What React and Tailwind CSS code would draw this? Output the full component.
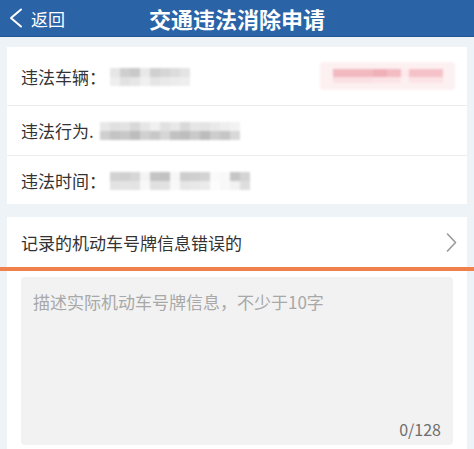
const FONT = { fontFamily: '"Noto Sans CJK SC", "Noto Sans", sans-serif' };

// mosaic rows for blurred values (top row / bottom row shades)
const vehicle = [
  ["bg-[#e6e6e6]", "bg-[#cfcfcf]", "bg-[#c9c9c9]", "bg-[#e8e8e8]", "bg-[#d0d0d0]", "bg-[#d6d6d6]", "bg-[#dcdcdc]", "bg-[#e4e4e4]"],
  ["bg-[#eeeeee]", "bg-[#e2e2e2]", "bg-[#e6e6e6]", "bg-[#f0f0f0]", "bg-[#e5e5e5]", "bg-[#e9e9e9]", "bg-[#ececec]", "bg-[#eeeeee]"],
];

const behavior = [
  ["bg-[#e8e8e8]", "bg-[#e0e0e0]", "bg-[#e3e3e3]", "bg-[#d8d8d8]", "bg-[#e6e6e6]", "bg-[#f0f0f0]", "bg-[#e1e1e1]", "bg-[#e8e8e8]", "bg-[#d9d9d9]", "bg-[#e6e6e6]", "bg-[#e4e4e4]", "bg-[#e9e9e9]", "bg-[#eeeeee]", "bg-[#f2f2f2]"],
  ["bg-[#cfcfcf]", "bg-[#c4c4c4]", "bg-[#c8c8c8]", "bg-[#bdbdbd]", "bg-[#d0d0d0]", "bg-[#c8c8c8]", "bg-[#d6d6d6]", "bg-[#c2c2c2]", "bg-[#bebebe]", "bg-[#cacaca]", "bg-[#bcbcbc]", "bg-[#cdcdcd]", "bg-[#c6c6c6]", "bg-[#d8d8d8]"],
];

const timeRow = [
  ["bg-[#d2d2d2]", "bg-[#d0d0d0]", "bg-[#d6d6d6]", "bg-[#f4f4f4]", "bg-[#c4c4c4]", "bg-[#c2c2c2]", "bg-[#f6f6f6]", "bg-[#cdcdcd]", "bg-[#cfcfcf]", "bg-[#d3d3d3]", "bg-[#fafafa]", "bg-[#f8f8f8]", "bg-[#c6c6c6]", "bg-[#d4d4d4]"],
  ["bg-[#e2e2e2]", "bg-[#e4e4e4]", "bg-[#e3e3e3]", "bg-[#f8f8f8]", "bg-[#e0e0e0]", "bg-[#e2e2e2]", "bg-[#f8f8f8]", "bg-[#e6e6e6]", "bg-[#e8e8e8]", "bg-[#ebebeb]", "bg-[#fcfcfc]", "bg-[#f8f8f8]", "bg-[#f2f2f2]", "bg-[#dedede]"],
];

const Mosaic = ({ rows, cell }) => (
  <div className="flex flex-col blur-[1px]">
    {rows.map((row, i) => (
      <div key={i} className="flex">
        {row.map((c, j) => (
          <div key={j} className={`${cell} ${c}`} />
        ))}
      </div>
    ))}
  </div>
);

const Row = ({ label, children, className }) => (
  <div className={`flex items-center pl-[14px] pr-[12px] ${className}`}>
    <span className="text-[17px] text-[#333333] leading-none">{label}</span>
    {children}
  </div>
);

export default function App() {
  return (
    <div className="w-[474px] h-[449px] overflow-hidden bg-[#eef3f8] flex flex-col" style={FONT}>
      {/* header */}
      <div className="relative h-[37px] shrink-0 bg-[#2b63a7] border-b border-[#1f5594] flex items-center justify-center">
        <div className="absolute left-[9px] top-0 h-full flex items-center text-white">
          <svg width="14" height="20" viewBox="0 0 14 20" fill="none" stroke="currentColor" strokeWidth="2" strokeLinecap="round" strokeLinejoin="round">
            <polyline points="12,1.5 2,10 12,18.5" />
          </svg>
          <span className="text-[17px] ml-[8px] leading-none">返回</span>
        </div>
        <h1 className="text-white text-[22px] font-bold tracking-normal leading-none">交通违法消除申请</h1>
      </div>

      {/* info card */}
      <div className="mx-[7px] mt-[10px] bg-white">
        <Row label="违法车辆：" className="h-[59px] border-b border-[#ececec]">
          <div className="ml-[4px] mt-[1px]">
            <Mosaic rows={vehicle} cell="w-[10px] h-[9px]" />
          </div>
          <div className="ml-auto w-[135px] h-[28px] bg-[#fdf0f1] rounded-sm flex items-center justify-center blur-[1px]">
            <div className="flex flex-col">
              <div className="flex">
                <div className="w-[40px] h-[8px] bg-[#f2b9c0]" />
                <div className="w-[14px] h-[8px] bg-[#f0b0b8]" />
                <div className="w-[14px] h-[8px] bg-[#f3bcc3]" />
                <div className="w-[8px] h-[8px] bg-[#fde9ec]" />
                <div className="w-[34px] h-[8px] bg-[#f4c2c8]" />
              </div>
              <div className="flex">
                <div className="w-[40px] h-[6px] bg-[#fae0e3]" />
                <div className="w-[28px] h-[6px] bg-[#fbe4e7]" />
                <div className="w-[8px] h-[6px] bg-[#fdf0f1]" />
                <div className="w-[34px] h-[6px] bg-[#fbe3e6]" />
              </div>
            </div>
          </div>
        </Row>
        <Row label="违法行为" className="h-[50px] border-b border-[#ececec]">
          <span className="text-[17px] text-[#333333] leading-none">.</span>
          <div className="ml-[6px]">
            <Mosaic rows={behavior} cell="w-[10px] h-[9px]" />
          </div>
        </Row>
        <Row label="违法时间：" className="h-[48px]">
          <div className="ml-[4px] mt-[2px]">
            <Mosaic rows={timeRow} cell="w-[10px] h-[9px]" />
          </div>
        </Row>
      </div>

      {/* reason card */}
      <div className="mx-[7px] mt-[13px] h-[50px] shrink-0 bg-white flex items-center pl-[14px] pr-[10px]">
        <span className="text-[17px] text-[#333333] leading-none">记录的机动车号牌信息错误的</span>
        <svg width="11" height="19" viewBox="0 0 11 19" fill="none" stroke="#9a9a9a" strokeWidth="1.6" strokeLinecap="round" strokeLinejoin="round" className="ml-auto">
          <polyline points="1.5,1 9.5,9.5 1.5,18" />
        </svg>
      </div>
      <div className="h-[4px] shrink-0 bg-[#f0804c]" />

      {/* description */}
      <div className="mx-[7px] flex-1 bg-white px-[14px] pt-[6px]">
        <div className="relative h-[168px] bg-[#f2f2f2] rounded-sm px-[12px] pt-[12px]">
          <p className="text-[17px] text-[#a8a8a8] leading-[26px]">描述实际机动车号牌信息，不少于10字</p>
          <span className="absolute right-[12px] bottom-[8px] text-[16px] text-[#6e6e6e] leading-none">0/128</span>
        </div>
      </div>
    </div>
  );
}
